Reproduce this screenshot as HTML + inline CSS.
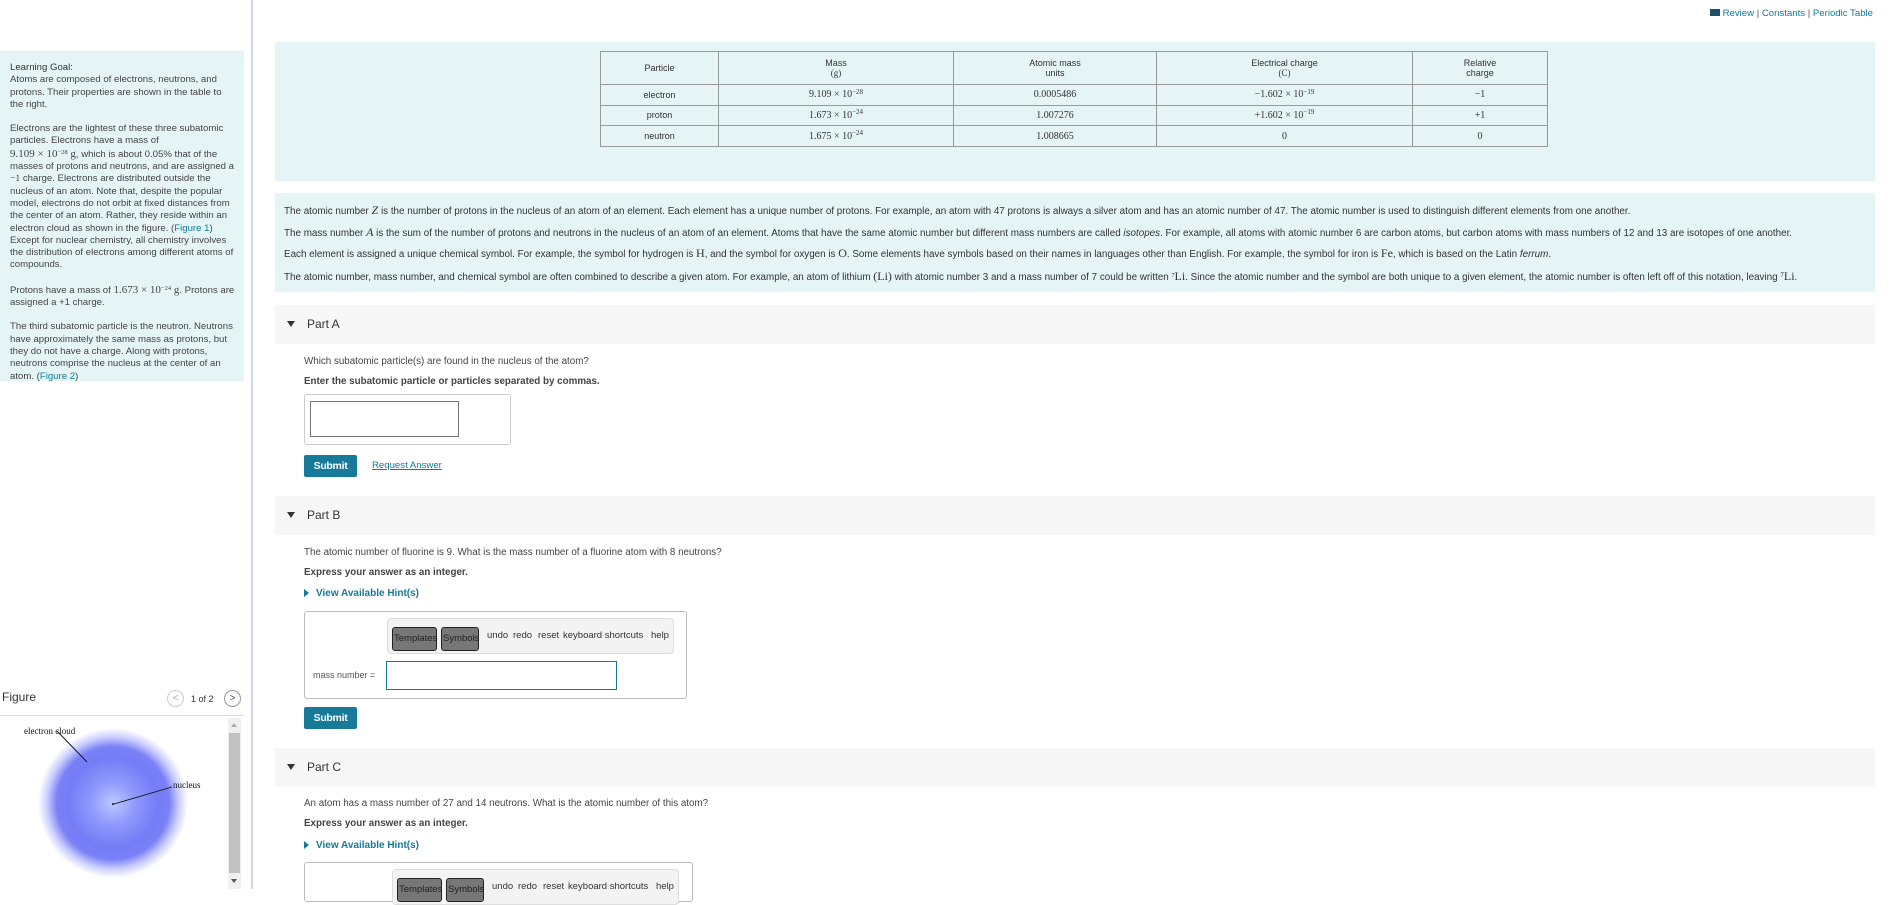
<!DOCTYPE html>
<html><head><meta charset="utf-8"><style>
*{margin:0;padding:0;box-sizing:border-box}
body{width:1893px;height:889px;overflow:hidden;background:#fff;font-family:"Liberation Sans",Arial,sans-serif;color:#333;position:relative}
.abs{position:absolute}
a{color:#0f7a9c}
.m{font-family:"Liberation Serif","DejaVu Serif",serif}
sup{line-height:0;vertical-align:0;position:relative;top:-0.5em}
#side{left:0;top:0;width:253px;height:889px;border-right:2px solid #c9d9e8}
#goal{left:0;top:51px;width:244px;height:330px;background:#e5f4f5;padding:11px 8px 0 10px;font-size:9.6px;line-height:12.3px;color:#444}
#goal p{margin-bottom:12px}
.panel{background:#e5f4f5}
table{border-collapse:collapse;font-size:9px;color:#333}
td,th{border:1px solid #999;text-align:center;font-weight:normal}
.txt{font-size:9.85px;color:#333;white-space:nowrap}
.ph{left:275px;width:1600px;height:39px;background:#f7f7f7;font-size:12px;color:#333}
.ph .tri{position:absolute;left:12px;top:16px;width:0;height:0;border-left:4.5px solid transparent;border-right:4.5px solid transparent;border-top:6px solid #333}
.ph span{position:absolute;left:32px;top:12px}
.q{left:304px;font-size:9.8px;color:#444;white-space:nowrap}
.b{font-weight:bold;color:#444}
.btn{left:304px;width:53px;height:22px;background:#187a99;color:#fff;font-weight:bold;font-size:10.5px;text-align:center;line-height:22px;border-radius:2px;letter-spacing:-.3px}
.hint{left:304px;font-size:10px;font-weight:bold;color:#157a99}
.hint i{display:inline-block;width:0;height:0;border-top:4px solid transparent;border-bottom:4px solid transparent;border-left:5px solid #157a99;margin-right:7px;vertical-align:-1px}
.tb{border:1px solid #ddd;border-radius:4px;background:#f3f3f3;font-size:9.5px;color:#333}
.tbb{position:absolute;top:8px;height:24px;background:#777;border:1.5px solid #222;border-radius:3px;color:#222;font-size:9.5px;line-height:22px;padding:0 1px}
</style></head><body>
<div id="side" class="abs"></div>
<div id="goal" class="abs">
<p><span style="color:#333">Learning Goal:</span><br>Atoms are composed of electrons, neutrons, and protons. Their properties are shown in the table to the right.</p>
<p>Electrons are the lightest of these three subatomic particles. Electrons have a mass of<br><span class="m" style="font-size:11px">9.109 × 10<sup style="font-size:6.5px">−28</sup> g</span>, which is about 0.05% that of the masses of protons and neutrons, and are assigned a <span class="m">−1</span> charge. Electrons are distributed outside the nucleus of an atom. Note that, despite the popular model, electrons do not orbit at fixed distances from the center of an atom. Rather, they reside within an electron cloud as shown in the figure. (<a>Figure 1</a>) Except for nuclear chemistry, all chemistry involves the distribution of electrons among different atoms of compounds.</p>
<p>Protons have a mass of <span class="m" style="font-size:11px">1.673 × 10<sup style="font-size:6.5px">−24</sup> g</span>. Protons are assigned a +1 charge.</p>
<p>The third subatomic particle is the neutron. Neutrons have approximately the same mass as protons, but they do not have a charge. Along with protons, neutrons comprise the nucleus at the center of an atom. (<a>Figure 2</a>)</p>
</div>

<div class="abs" style="left:2px;top:690px;font-size:12px;color:#333">Figure</div>
<div class="abs" style="left:167px;top:690px;width:17px;height:17px;border:1px solid #ccc;border-radius:50%;font-size:10px;color:#aaa;text-align:center;line-height:15px">&lt;</div>
<div class="abs" style="left:191px;top:694px;font-size:9px;color:#333">1 of 2</div>
<div class="abs" style="left:224px;top:690px;width:17px;height:17px;border:1px solid #999;border-radius:50%;font-size:10px;color:#555;text-align:center;line-height:15px">&gt;</div>
<div class="abs" style="left:0;top:715px;width:244px;border-top:1px solid #ddd"></div>
<div class="abs" style="left:38px;top:728px;width:150px;height:150px;background:radial-gradient(circle closest-side,#bcc8ff 0%,#8f98fc 30%,#757cf6 60%,#7a80f6 75%,rgba(150,156,255,.5) 88%,rgba(255,255,255,0) 100%)"></div>
<svg class="abs" style="left:0;top:715px" width="228" height="174"><line x1="57" y1="16" x2="87" y2="47" stroke="#111" stroke-width="0.9"/><line x1="114" y1="89" x2="172" y2="72" stroke="#111" stroke-width="0.9"/><circle cx="113" cy="89" r="1" fill="#111"/></svg>
<div class="abs m" style="left:24px;top:726px;font-size:9px;color:#111">electron cloud</div>
<div class="abs m" style="left:173px;top:780px;font-size:9px;color:#111">nucleus</div>
<div class="abs" style="left:228px;top:718px;width:13px;height:171px;background:#f0f0f0"></div>
<div class="abs" style="left:229px;top:733px;width:11px;height:140px;background:#c1c1c1"></div>
<div class="abs" style="left:231px;top:723px;border-left:3.5px solid transparent;border-right:3.5px solid transparent;border-bottom:4px solid #aaa"></div>
<div class="abs" style="left:231px;top:879px;border-left:3.5px solid transparent;border-right:3.5px solid transparent;border-top:4px solid #555"></div>

<div class="abs" style="right:20px;top:8px;font-size:9.6px;color:#555"><span style="display:inline-block;width:10px;height:7px;background:#1f4f6b;margin-right:3px"></span><a>Review</a> | <a>Constants</a> | <a>Periodic Table</a></div>

<div class="abs panel" style="left:275px;top:42px;width:1600px;height:139px"></div>
<table class="abs" style="left:600px;top:51px;width:948px;height:96px">
<tr style="height:33px"><td style="width:118px">Particle</td><td style="width:235px">Mass<br><span class="m">(g)</span></td><td style="width:203px">Atomic mass<br>units</td><td style="width:256px">Electrical charge<br><span class="m">(C)</span></td><td>Relative<br>charge</td></tr>
<tr><td>electron</td><td class="m" style="font-size:10px">9.109 × 10<sup style="font-size:7px">−28</sup></td><td class="m" style="font-size:10px">0.0005486</td><td class="m" style="font-size:10px">−1.602 × 10<sup style="font-size:7px">−19</sup></td><td class="m" style="font-size:10px">−1</td></tr>
<tr><td>proton</td><td class="m" style="font-size:10px">1.673 × 10<sup style="font-size:7px">−24</sup></td><td class="m" style="font-size:10px">1.007276</td><td class="m" style="font-size:10px">+1.602 × 10<sup style="font-size:7px">−19</sup></td><td class="m" style="font-size:10px">+1</td></tr>
<tr><td>neutron</td><td class="m" style="font-size:10px">1.675 × 10<sup style="font-size:7px">−24</sup></td><td class="m" style="font-size:10px">1.008665</td><td class="m" style="font-size:10px">0</td><td class="m" style="font-size:10px">0</td></tr>
</table>

<div class="abs panel" style="left:275px;top:193px;width:1600px;height:99px"></div>
<div class="abs txt" style="left:284px;top:203px">The atomic number <i class="m" style="font-size:12px">Z</i> is the number of protons in the nucleus of an atom of an element. Each element has a unique number of protons. For example, an atom with 47 protons is always a silver atom and has an atomic number of 47. The atomic number is used to distinguish different elements from one another.</div>
<div class="abs txt" style="left:284px;top:225px">The mass number <i class="m" style="font-size:12px">A</i> is the sum of the number of protons and neutrons in the nucleus of an atom of an element. Atoms that have the same atomic number but different mass numbers are called <i>isotopes</i>. For example, all atoms with atomic number 6 are carbon atoms, but carbon atoms with mass numbers of 12 and 13 are isotopes of one another.</div>
<div class="abs txt" style="left:284px;top:246px">Each element is assigned a unique chemical symbol. For example, the symbol for hydrogen is <span class="m" style="font-size:12px">H</span>, and the symbol for oxygen is <span class="m" style="font-size:12px">O</span>. Some elements have symbols based on their names in languages other than English. For example, the symbol for iron is <span class="m" style="font-size:12px">Fe</span>, which is based on the Latin <i>ferrum</i>.</div>
<div class="abs txt" style="left:284px;top:269px">The atomic number, mass number, and chemical symbol are often combined to describe a given atom. For example, an atom of lithium <span class="m" style="font-size:12px">(Li)</span> with atomic number 3 and a mass number of 7 could be written <span class="m" style="font-size:12px"><sup style="font-size:6px">7</sup>Li</span>. Since the atomic number and the symbol are both unique to a given element, the atomic number is often left off of this notation, leaving <span class="m" style="font-size:12px"><sup style="font-size:7px">7</sup>Li</span>.</div>

<div class="abs ph" style="top:305px"><div class="tri"></div><span>Part A</span></div>
<div class="abs q" style="top:356px">Which subatomic particle(s) are found in the nucleus of the atom?</div>
<div class="abs q b" style="top:376px">Enter the subatomic particle or particles separated by commas.</div>
<div class="abs" style="left:304px;top:394px;width:207px;height:51px;border:1px solid #ccc;border-radius:3px"></div>
<div class="abs" style="left:310px;top:401px;width:149px;height:36px;border:1px solid #777"></div>
<div class="abs btn" style="top:455px">Submit</div>
<div class="abs" style="left:372px;top:460px;font-size:9.6px;color:#0f7a9c;text-decoration:underline">Request Answer</div>

<div class="abs ph" style="top:496px"><div class="tri"></div><span>Part B</span></div>
<div class="abs q" style="top:547px">The atomic number of fluorine is 9. What is the mass number of a fluorine atom with 8 neutrons?</div>
<div class="abs q b" style="top:567px">Express your answer as an integer.</div>
<div class="abs hint" style="top:588px"><i></i>View Available Hint(s)</div>
<div class="abs" style="left:304px;top:611px;width:383px;height:88px;border:1px solid #bbb;border-radius:3px"></div>
<div class="abs tb" style="left:387px;top:618px;width:287px;height:36px">
<div class="tbb" style="left:4px;width:45px">Templates</div>
<div class="tbb" style="left:53px;width:38px">Symbols</div>
<span class="abs" style="left:99px;top:11px">undo</span><span class="abs" style="left:125px;top:11px">redo</span><span class="abs" style="left:150px;top:11px">reset</span><span class="abs" style="left:175px;top:11px">keyboard shortcuts</span><span class="abs" style="left:263px;top:11px">help</span>
</div>
<div class="abs" style="left:313px;top:670px;font-size:9px;color:#555">mass number =</div>
<div class="abs" style="left:386px;top:661px;width:231px;height:29px;border:1px solid #157a99"></div>
<div class="abs btn" style="top:707px">Submit</div>

<div class="abs ph" style="top:748px"><div class="tri"></div><span>Part C</span></div>
<div class="abs q" style="top:798px">An atom has a mass number of 27 and 14 neutrons. What is the atomic number of this atom?</div>
<div class="abs q b" style="top:818px">Express your answer as an integer.</div>
<div class="abs hint" style="top:840px"><i></i>View Available Hint(s)</div>
<div class="abs" style="left:304px;top:862px;width:389px;height:40px;border:1px solid #bbb;border-radius:3px"></div>
<div class="abs tb" style="left:392px;top:869px;width:287px;height:36px">
<div class="tbb" style="left:4px;width:45px">Templates</div>
<div class="tbb" style="left:53px;width:38px">Symbols</div>
<span class="abs" style="left:99px;top:11px">undo</span><span class="abs" style="left:125px;top:11px">redo</span><span class="abs" style="left:150px;top:11px">reset</span><span class="abs" style="left:175px;top:11px">keyboard shortcuts</span><span class="abs" style="left:263px;top:11px">help</span>
</div>
</body></html>
